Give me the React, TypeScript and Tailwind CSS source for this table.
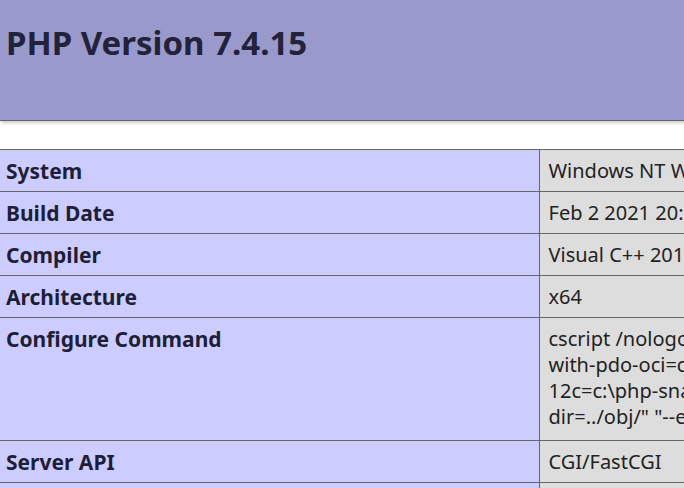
const rows: { label: string; value: string[] }[] = [
  { label: 'System', value: ['Windows NT WIN-SERVER 10.0 build 17763 (Windows Server 2019) AMD64'] },
  { label: 'Build Date', value: ['Feb 2 2021 20:12:51'] },
  { label: 'Compiler', value: ['Visual C++ 2017'] },
  { label: 'Architecture', value: ['x64'] },
  {
    label: 'Configure Command',
    value: [
      'cscript /nologo /e:jscript configure.js "--enable-snapshot-build" "--enable-debug-pack" "--',
      'with-pdo-oci=c:\\php-snap-build\\deps_aux\\oracle\\x64\\instantclient_12_1\\sdk,shared" "--with-oci8-',
      '12c=c:\\php-snap-build\\deps_aux\\oracle\\x64\\instantclient_12_1\\sdk,shared" "--enable-object-out-',
      'dir=../obj/" "--enable-com-dotnet=shared" "--without-analyzer" "--with-pgo"',
    ],
  },
  { label: 'Server API', value: ['CGI/FastCGI'] },
  { label: 'Virtual Directory Support', value: ['disabled'] },
];

export default function App() {
  return (
    <div
      className="w-[684px] h-[488px] overflow-hidden bg-white text-[#222]"
      style={{ fontFamily: '"Noto Sans", "Open Sans", Arial, sans-serif' }}
    >
      <div className="w-[1200px]">
        <div className="h-[121px] bg-[#9999cc] border-b border-[#666] shadow-[1px_2px_3px_#ccc] pt-[22px] pl-[6px]">
          <h1 className="text-[33px] font-bold leading-[42px] text-[#22223a]">PHP Version 7.4.15</h1>
        </div>
        <div className="h-[28px]" />
        <table className="table-fixed border-collapse w-[1200px] text-[20px] leading-[26px]">
          <colgroup>
            <col className="w-[539px]" />
            <col />
          </colgroup>
          <tbody>
            {rows.map((r) => (
              <tr key={r.label}>
                <td className="align-top bg-[#ccccff] border border-l-0 border-[#666] text-[21px] font-bold pl-[6px] pr-[6px] pt-[8px] pb-[7px] text-[#1e1e36]">
                  {r.label}
                </td>
                <td
                  className={
                    r.value.length > 1
                      ? 'align-top bg-[#dddddd] border border-[#666] pl-[9px] pr-[6px] pt-[8px] pb-[10px] overflow-hidden'
                      : 'align-top bg-[#dddddd] border border-[#666] pl-[9px] pr-[6px] pt-[8px] pb-[7px] overflow-hidden'
                  }
                >
                  {r.value.map((line, i) => (
                    <div key={i} className="whitespace-nowrap">
                      {line}
                    </div>
                  ))}
                </td>
              </tr>
            ))}
          </tbody>
        </table>
      </div>
    </div>
  );
}
